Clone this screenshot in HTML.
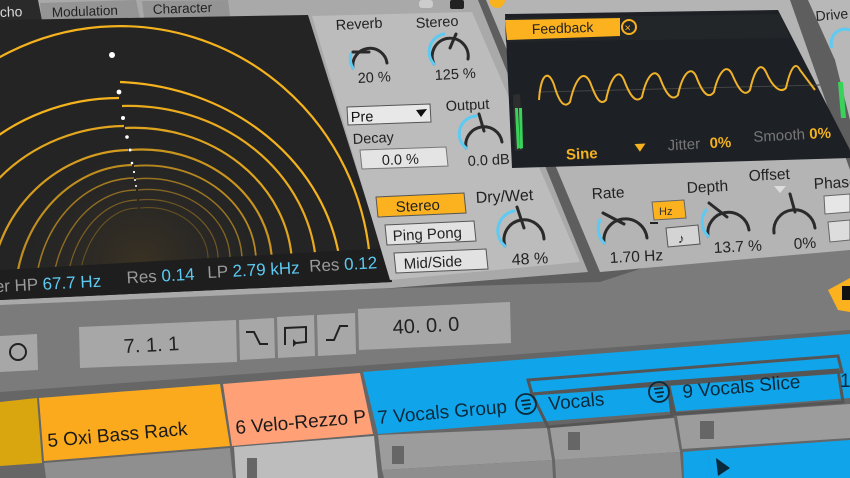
<!DOCTYPE html>
<html><head><meta charset="utf-8"><style>
html,body{margin:0;padding:0;width:850px;height:478px;overflow:hidden;background:#7b7b7b}
svg{display:block}
text{font-family:"Liberation Sans",sans-serif}
</style></head><body>
<svg width="850" height="478" viewBox="0 0 850 478" xmlns="http://www.w3.org/2000/svg">
<defs>
<clipPath id="echoClip"><polygon points="0,22 308,16 388,262 0,272"/></clipPath>
<radialGradient id="tun" cx="140" cy="265" r="120" gradientUnits="userSpaceOnUse">
<stop offset="0" stop-color="#3a3122"/><stop offset="1" stop-color="#2a2a2a" stop-opacity="0"/></radialGradient>
</defs>
<rect width="850" height="478" fill="#7b7b7b"/>
<polygon points="0,0 850,0 850,200 600,282 0,300" fill="#5e5e5e"/>
<polygon points="0,0 478,0 588,272 392,288 0,305" fill="#a9a9a9"/>
<polygon points="0,0 38,0 42,20 0,22" fill="#2a2a2a"/>
<text x="0" y="17" font-size="14" fill="#ddd" transform="rotate(-2 0 17)">cho</text>
<polygon points="40,3 136,0 140,18 42,22" fill="#949494"/>
<text x="52" y="17" font-size="13.5" fill="#222" transform="rotate(-2 52 17)">Modulation</text>
<polygon points="142,1 228,0 230,16 144,18" fill="#949494"/>
<text x="153" y="14" font-size="13.5" fill="#222" transform="rotate(-2 153 14)">Character</text>
<polygon points="0,20 308,15 392,282 0,300" fill="#242424"/>
<g clip-path="url(#echoClip)">
<rect x="0" y="0" width="400" height="300" fill="url(#tun)"/>
<g fill="none" stroke="#f4b21e" stroke-width="2.2">
<path d="M-130,300 A242,245 0 0 1 370,260" />
<path d="M120,82 A232,205 0 0 1 340,262"/>
<path d="M-80,300 A200,185 0 0 1 119,98"/>
<path d="M122,106 A188,168 0 0 1 316,262" stroke-opacity=".95"/>
<path d="M-45,300 A172,160 0 0 1 124,126" stroke-opacity=".92"/>
<path d="M125,128 A158,140 0 0 1 292,262" stroke-opacity=".9"/>
<path d="M-10,300 A142,148 0 0 1 128,150" stroke-opacity=".85"/>
<path d="M130,150 A130,115 0 0 1 272,262" stroke-opacity=".8"/>
<path d="M15,300 A120,135 0 0 1 132,165" stroke-opacity=".75"/>
<path d="M134,166 A110,96 0 0 1 256,262" stroke-opacity=".7" stroke-width="1.8"/>
<path d="M35,300 A100,120 0 0 1 134,178" stroke-opacity=".6" stroke-width="1.6"/>
<path d="M136,179 A95,82 0 0 1 242,262" stroke-opacity=".55" stroke-width="1.5"/>
<path d="M52,300 A85,108 0 0 1 136,190" stroke-opacity=".5" stroke-width="1.4"/>
<path d="M138,190 A82,70 0 0 1 230,262" stroke-opacity=".45" stroke-width="1.3"/>
<path d="M66,300 A72,98 0 0 1 137,200" stroke-opacity=".4" stroke-width="1.2"/>
<path d="M139,200 A70,60 0 0 1 218,262" stroke-opacity=".35" stroke-width="1.2"/>
<path d="M78,300 A60,88 0 0 1 138,208" stroke-opacity=".3" stroke-width="1.1"/>
<path d="M140,208 A60,52 0 0 1 208,262" stroke-opacity=".28" stroke-width="1.1"/>
</g>
<g fill="#fff"><circle cx="112" cy="55" r="3"/><circle cx="119" cy="92" r="2.4"/><circle cx="123" cy="118" r="2"/><circle cx="127" cy="137" r="1.8"/><circle cx="130" cy="150" r="1.5"/><circle cx="132" cy="163" r="1.3"/><circle cx="134" cy="172" r="1.1"/><circle cx="135" cy="180" r="1"/><circle cx="136" cy="186" r="1"/></g>
<polygon points="0,270 388,248 400,300 0,310" fill="#1e1e1e"/>
</g>
<polygon points="0,272 388,250 392,282 0,300" fill="#1e1e1e"/>
<g font-size="17" transform="rotate(-3 0 290)">
<text x="-5" y="292" fill="#9a9a9a">er HP <tspan fill="#5ccaf2">67.7 Hz</tspan></text>
<text x="127" y="290" fill="#9a9a9a">Res <tspan fill="#5ccaf2">0.14</tspan></text>
<text x="208" y="289" fill="#9a9a9a">LP <tspan fill="#5ccaf2">2.79 kHz</tspan></text>
<text x="310" y="288" fill="#9a9a9a">Res <tspan fill="#5ccaf2">0.12</tspan></text>
</g>
<polygon points="312,16 472,12 580,262 390,280" fill="#bcbcbc"/>
<g font-size="14.5" fill="#222">
<text x="336" y="30" transform="rotate(-3 336 30)">Reverb</text>
<text x="416" y="28" transform="rotate(-3 416 28)">Stereo</text>
<text x="358" y="83" transform="rotate(-3 358 83)">20 %</text>
<text x="435" y="80" transform="rotate(-3 435 80)">125 %</text>
<text x="446" y="111" transform="rotate(-3 446 111)">Output</text>
<text x="468" y="166" transform="rotate(-3 468 166)">0.0 dB</text>
<text x="353" y="144" transform="rotate(-3 353 144)">Decay</text>
<text x="476" y="203" font-size="16" transform="rotate(-3 476 203)">Dry/Wet</text>
<text x="512" y="265" font-size="16" transform="rotate(-3 512 265)">48 %</text>
</g>
<g fill="none" stroke-width="3" stroke-linecap="round">
<path d="M353,68 A17,17 0 1 1 387,63" stroke="#2a2a2a"/><path d="M353,68 A17,17 0 0 1 351,54" stroke="#5ccaf2"/><line x1="369" y1="52" x2="353" y2="52" stroke="#2a2a2a"/>
<path d="M434,64 A18,18 0 1 1 468,59" stroke="#2a2a2a"/><path d="M434,64 A18,18 0 0 1 444,34" stroke="#5ccaf2"/><line x1="450" y1="48" x2="456" y2="34" stroke="#2a2a2a"/>
<path d="M466,148 A18,18 0 1 1 502,142" stroke="#2a2a2a"/><path d="M466,148 A18,18 0 0 1 476,116" stroke="#5ccaf2"/><line x1="484" y1="131" x2="479" y2="114" stroke="#2a2a2a"/>
<path d="M505,246 A20,20 0 1 1 544,239" stroke="#2a2a2a"/><path d="M505,246 A20,20 0 0 1 514,211" stroke="#5ccaf2"/><line x1="524" y1="228" x2="517" y2="207" stroke="#2a2a2a"/>
</g>
<polygon points="347,107 430,104 431,122 348,125" fill="#e8e8e8" stroke="#555" stroke-width="1"/>
<text x="351" y="122" font-size="14.5" fill="#111" transform="rotate(-2 351 122)">Pre</text>
<polygon points="416,110 427,109 421,117" fill="#111"/>
<polygon points="360,150 446,147 448,166 362,169" fill="#e4e4e4" stroke="#777"/>
<text x="382" y="165" font-size="14.5" fill="#222" transform="rotate(-2 382 165)">0.0 %</text>
<polygon points="376,197 464,193 466,213 378,217" fill="#fbb21e" stroke="#555"/>
<text x="396" y="212" font-size="15" fill="#222" transform="rotate(-3 396 212)">Stereo</text>
<polygon points="385,225 474,221 476,241 387,245" fill="#e2e2e2" stroke="#555"/>
<text x="393" y="241" font-size="15" fill="#222" transform="rotate(-3 393 241)">Ping Pong</text>
<polygon points="394,253 486,249 488,269 396,273" fill="#e2e2e2" stroke="#555"/>
<text x="404" y="269" font-size="15" fill="#222" transform="rotate(-3 404 269)">Mid/Side</text>
<rect x="419" y="0" width="14" height="8" fill="#ccc" rx="3"/><rect x="450" y="0" width="14" height="9" fill="#222" rx="2"/>
<polygon points="486,0 790,0 850,170 850,250 600,272" fill="#b4b4b4"/>
<circle cx="497" cy="0" r="8" fill="#f7b21e"/>
<polygon points="505,14 778,10 850,150 850,158 512,168" fill="#1d2024"/>
<polygon points="505,18 780,14 790,38 506,42" fill="#232629"/>
<polygon points="505,20 620,18 620,36 507,40" fill="#fbb21e"/>
<text x="532" y="34" font-size="14" fill="#222" transform="rotate(-2 532 34)">Feedback</text>
<circle cx="629" cy="27" r="7" fill="none" stroke="#fbb21e" stroke-width="2"/>
<text x="624.5" y="31.5" font-size="11" fill="#fbb21e">×</text>
<line x1="538" y1="92" x2="820" y2="85" stroke="#444" stroke-width="1"/>
<path d="M539,100 C541,70 550,70 555,88 C560,104 565,108 570,102 C575,80 583,68 590,82 C596,98 600,106 606,100 C610,80 618,66 624,80 C630,96 636,104 642,97 C646,78 654,66 660,78 C666,94 672,102 678,95 C682,76 690,64 696,76 C702,92 708,100 714,92 C718,74 726,62 732,74 C738,88 744,98 750,90 C754,72 760,60 766,72 C772,86 780,94 786,88 C790,70 795,60 800,70 L815,90" fill="none" stroke="#f0b22a" stroke-width="2"/>
<g font-size="15" font-weight="bold" transform="rotate(-3 560 155)">
<text x="566" y="160" fill="#f4b21e">Sine</text>
<polygon points="635,148 646,148 640,156" fill="#f4b21e"/>
<text x="668" y="156" fill="#777" font-weight="normal">Jitter</text><text x="710" y="156" fill="#f4b21e">0%</text>
<text x="754" y="152" fill="#777" font-weight="normal">Smooth</text><text x="810" y="152" fill="#f4b21e">0%</text>
</g>
<polygon points="513,95 520,94 523,150 515,151" fill="#2e2e2e"/>
<polygon points="515,108 518,108 520,148 517,149" fill="#39d35a"/>
<polygon points="519,108 522,108 523,148 520,149" fill="#39d35a"/>
<g font-size="15.5" fill="#222">
<text x="592" y="199" transform="rotate(-3 592 199)">Rate</text>
<text x="610" y="263" transform="rotate(-3 610 263)">1.70 Hz</text>
<text x="687" y="193" transform="rotate(-3 687 193)">Depth</text>
<text x="714" y="253" transform="rotate(-3 714 253)">13.7 %</text>
<text x="749" y="181" transform="rotate(-3 749 181)">Offset</text>
<text x="794" y="249" transform="rotate(-3 794 249)">0%</text>
<text x="814" y="189" transform="rotate(-3 814 189)">Phase</text>
</g>
<polygon points="652,202 684,200 686,218 654,220" fill="#fbb21e" stroke="#666"/>
<text x="659" y="215" font-size="11" fill="#333">Hz</text>
<polygon points="666,228 698,225 700,244 668,247" fill="#d4d4d4" stroke="#555"/>
<text x="678" y="243" font-size="13" fill="#222">♪</text>
<line x1="650" y1="223" x2="658" y2="223" stroke="#222" stroke-width="2"/>
<g fill="none" stroke-width="3" stroke-linecap="round">
<path d="M604,243 A21,21 0 1 1 647,238" stroke="#2a2a2a"/><path d="M604,243 A21,21 0 0 1 600,220" stroke="#5ccaf2"/><line x1="624" y1="224" x2="603" y2="213" stroke="#2a2a2a"/>
<path d="M708,236 A20,20 0 1 1 749,230" stroke="#2a2a2a"/><path d="M708,236 A20,20 0 0 1 706,210" stroke="#5ccaf2"/><line x1="727" y1="217" x2="709" y2="203" stroke="#2a2a2a"/>
<path d="M774,233 A20,20 0 1 1 815,228" stroke="#2a2a2a"/><line x1="795" y1="212" x2="790" y2="194" stroke="#2a2a2a"/>
</g>
<polygon points="774,186 786,186 780,193" fill="#ddd"/>
<polygon points="824,196 850,194 850,212 825,214" fill="#e6e6e6" stroke="#666"/>
<polygon points="828,222 850,220 850,240 830,242" fill="#ddd" stroke="#666"/>
<polygon points="795,0 850,0 850,150" fill="#5e5e5e"/>
<polygon points="808,0 850,0 850,120 835,60" fill="#b8b8b8"/>
<text x="816" y="21" font-size="14" fill="#222" transform="rotate(-5 816 21)">Drive</text>
<path d="M832,48 A14,14 0 0 1 850,30" fill="none" stroke="#5ccaf2" stroke-width="3"/>
<polygon points="838,82 843,82 846,118 841,118" fill="#39d35a"/>
<polygon points="828,290 850,278 850,312 838,310" fill="#fbb21e"/>
<rect x="842" y="286" width="8" height="14" fill="#111"/>
<polygon points="0,336 37,334 38,370 0,372" fill="#a7a7a7"/>
<circle cx="18" cy="352" r="8" fill="none" stroke="#222" stroke-width="2"/>
<polygon points="79,327 236,320 237,362 80,368" fill="#a7a7a7"/>
<text x="124" y="353" font-size="20" fill="#222" font-family="Liberation Mono" transform="rotate(-3 124 353)">7. 1. 1</text>
<polygon points="239,320 274,318 275,358 240,360" fill="#a7a7a7"/>
<path d="M246,332 L254,332 L260,344 L268,344" stroke="#222" stroke-width="2" fill="none"/>
<polygon points="277,317 314,315 315,356 278,358" fill="#a7a7a7"/>
<path d="M285,345 L285,328 L306,327 L306,342 L296,343" stroke="#222" stroke-width="2" fill="none"/><polygon points="293,339 293,347 297,343" fill="#222"/>
<polygon points="317,315 355,313 356,354 318,356" fill="#a7a7a7"/>
<path d="M326,340 L334,340 L340,326 L348,326" stroke="#222" stroke-width="2" fill="none"/>
<polygon points="358,309 510,302 511,343 359,350" fill="#a7a7a7"/>
<text x="393" y="334" font-size="20" fill="#222" font-family="Liberation Mono" transform="rotate(-3 393 334)">40. 0. 0</text>
<polygon points="0,392 850,330 850,478 0,478" fill="#666"/>
<polygon points="0,402 37,398 42,463 0,466" fill="#d9a60f"/>
<polygon points="39,398 220,384 230,446 44,461" fill="#fbaa1e"/>
<polygon points="223,384 360,373 373,434 232,446" fill="#ffa077"/>
<polygon points="363,372 850,334 850,398 378,434" fill="#10a4ea"/>
<polygon points="528,380 838,356 842,372 532,394" fill="none" stroke="#555" stroke-width="3"/>
<polygon points="532,394 668,382 672,416 548,427" fill="none" stroke="#555" stroke-width="3"/>
<polygon points="668,382 838,370 843,402 675,414" fill="none" stroke="#555" stroke-width="3"/>
<g font-size="19" fill="#1a1a1a">
<text x="48" y="447" transform="rotate(-5 48 447)">5 Oxi Bass Rack</text>
<text x="236" y="434" transform="rotate(-5 236 434)">6 Velo-Rezzo P</text>
<text x="378" y="424" fill="#0a2a3c" transform="rotate(-5 378 424)">7 Vocals Group</text>
<text x="549" y="410" fill="#0a2a3c" transform="rotate(-5 549 410)">Vocals</text>
<text x="683" y="398" fill="#0a2a3c" transform="rotate(-5 683 398)">9 Vocals Slice</text>
<text x="840" y="387" fill="#0a2a3c">1</text>
</g>
<g fill="none" stroke="#0a2a3c" stroke-width="1.8"><circle cx="526" cy="404" r="10"/><circle cx="659" cy="392" r="10"/></g>
<g stroke="#0a2a3c" stroke-width="1.8"><line x1="521" y1="401" x2="530" y2="400"/><line x1="522" y1="405" x2="531" y2="404"/><line x1="524" y1="409" x2="530" y2="408"/><line x1="654" y1="389" x2="663" y2="388"/><line x1="655" y1="393" x2="664" y2="392"/><line x1="657" y1="397" x2="663" y2="396"/></g>
<polygon points="44,463 230,448 233,478 46,478" fill="#8f8f8f"/>
<polygon points="234,447 374,436 378,478 236,478" fill="#bdbdbd"/>
<polygon points="378,435 547,428 552,460 382,470" fill="#9c9c9c"/>
<polygon points="382,470 552,460 553,478 384,478" fill="#8e8e8e"/>
<polygon points="550,428 674,418 680,452 555,460" fill="#9c9c9c"/>
<polygon points="555,460 680,452 682,478 556,478" fill="#8e8e8e"/>
<polygon points="677,416 850,404 850,438 682,449" fill="#9c9c9c"/>
<polygon points="707,450 850,440 850,478 712,478" fill="#10a4ea"/>
<polygon points="683,452 707,450 712,478 684,478" fill="#10a4ea"/>
<g fill="#666"><rect x="247" y="458" width="10" height="20"/><rect x="392" y="446" width="12" height="18"/><rect x="568" y="432" width="12" height="18"/><rect x="700" y="421" width="14" height="18"/></g>
<polygon points="716,458 730,468 718,476" fill="#0a2a3c"/>
</svg>
</body></html>
